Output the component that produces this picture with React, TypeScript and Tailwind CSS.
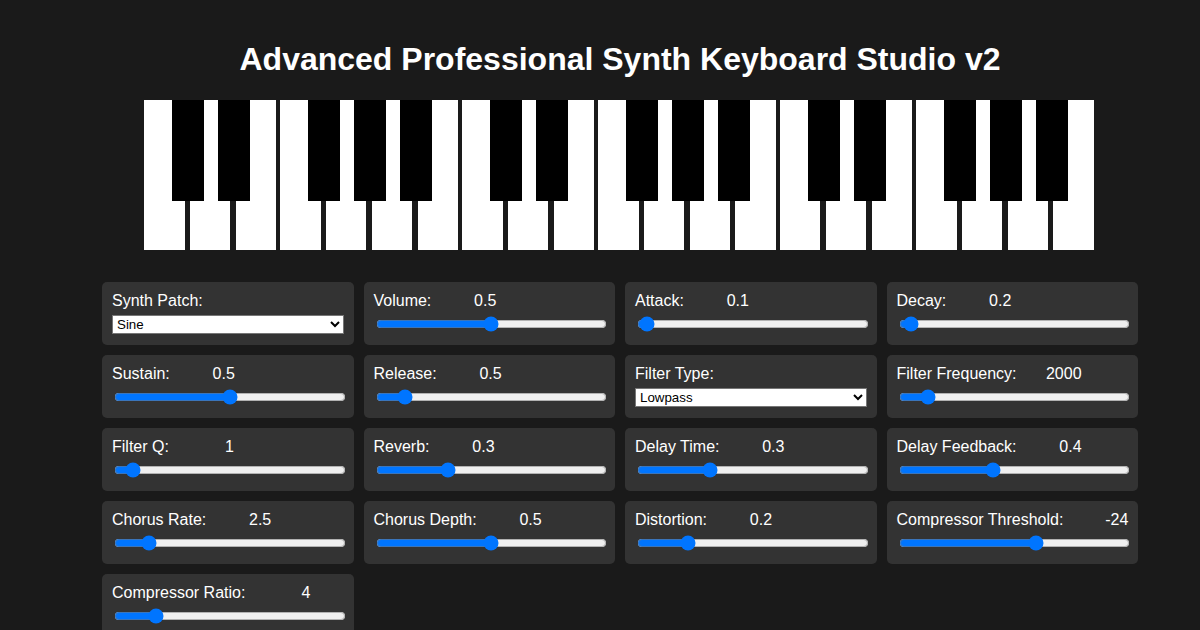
import React from "react";

type Ctl =
  | { kind: "select"; label: string; options: string[] }
  | { kind: "range"; label: string; value: string; min: number; max: number; v: number; step: number };

const controls: Ctl[] = [
  { kind: "select", label: "Synth Patch:", options: ["Sine", "Square", "Sawtooth", "Triangle"] },
  { kind: "range", label: "Volume:", value: "0.5", min: 0, max: 1, v: 0.5, step: 0.01 },
  { kind: "range", label: "Attack:", value: "0.1", min: 0, max: 10, v: 0.1, step: 0.01 },
  { kind: "range", label: "Decay:", value: "0.2", min: 0, max: 10, v: 0.2, step: 0.01 },
  { kind: "range", label: "Sustain:", value: "0.5", min: 0, max: 1, v: 0.5, step: 0.01 },
  { kind: "range", label: "Release:", value: "0.5", min: 0, max: 5, v: 0.5, step: 0.01 },
  { kind: "select", label: "Filter Type:", options: ["Lowpass", "Highpass", "Bandpass", "Notch"] },
  { kind: "range", label: "Filter Frequency:", value: "2000", min: 20, max: 20000, v: 2000, step: 1 },
  { kind: "range", label: "Filter Q:", value: "1", min: 0, max: 20, v: 1, step: 0.01 },
  { kind: "range", label: "Reverb:", value: "0.3", min: 0, max: 1, v: 0.3, step: 0.01 },
  { kind: "range", label: "Delay Time:", value: "0.3", min: 0, max: 1, v: 0.3, step: 0.01 },
  { kind: "range", label: "Delay Feedback:", value: "0.4", min: 0, max: 1, v: 0.4, step: 0.01 },
  { kind: "range", label: "Chorus Rate:", value: "2.5", min: 0, max: 20, v: 2.5, step: 0.01 },
  { kind: "range", label: "Chorus Depth:", value: "0.5", min: 0, max: 1, v: 0.5, step: 0.01 },
  { kind: "range", label: "Distortion:", value: "0.2", min: 0, max: 1, v: 0.2, step: 0.01 },
  { kind: "range", label: "Compressor Threshold:", value: "-24", min: -60, max: 0, v: -24, step: 1 },
  { kind: "range", label: "Compressor Ratio:", value: "4", min: 1, max: 20, v: 4, step: 0.1 },
];

const octave = [true, true, false, true, true, true, false];

function Keyboard() {
  const keys: { black: boolean; last: boolean }[] = [];
  for (let o = 0; o < 3; o++) {
    octave.forEach((b, i) => keys.push({ black: b, last: o === 2 && i === 6 }));
  }
  return (
    <div className="flex justify-center mb-[32px] pr-[2px]">
      <div className="flex">
        {keys.map((k, i) => (
          <div
            key={i}
            className={
              "relative w-[40.5px] h-[150px] bg-white " +
              (k.last ? "mr-0" : k.black ? "mr-[5.3px]" : "mr-[4px]")
            }
          >
            {k.black && (
              <div className="absolute left-[28px] top-0 w-[32px] h-[101px] bg-black z-10" />
            )}
          </div>
        ))}
      </div>
    </div>
  );
}

function Card({ c }: { c: Ctl }) {
  return (
    <div className="bg-[#333333] rounded-[5px] p-[10px]">
      {c.kind === "select" ? (
        <>
          <label className="block mb-[5px] leading-[normal] text-white whitespace-nowrap">{c.label}</label>
          <select
            defaultValue={c.options[0]}
            className="block w-full bg-white text-black text-[13.333px] leading-[normal] border border-[#767676] rounded-none"
          >
            {c.options.map((o) => (
              <option key={o}>{o}</option>
            ))}
          </select>
        </>
      ) : (
        <>
          <label className="block mb-[6px] leading-[normal] text-white whitespace-nowrap">
            {c.label}
            <span className="inline-block w-[60px] ml-[5px] text-right">{c.value}</span>
          </label>
          <input
            type="range"
            min={c.min}
            max={c.max}
            step={c.step}
            defaultValue={c.v}
            className="block w-full h-[16px] mt-[2px] mb-[3px] mx-[2px]"
          />
        </>
      )}
    </div>
  );
}

export default function App() {
  return (
    <div className="min-h-screen bg-[#1a1a1a] pt-[20px] pl-[40px] font-['Liberation_Sans',Arial,sans-serif] text-white">
      <h1 className="text-center text-[32px] font-bold leading-[normal] mt-[21.44px] mb-[22px]">
        Advanced Professional Synth Keyboard Studio v2
      </h1>
      <Keyboard />
      <div className="flex justify-center">
        <div className="grid grid-cols-4 gap-[10px] w-[1036px]">
          {controls.map((c, i) => (
            <Card key={i} c={c} />
          ))}
        </div>
      </div>
    </div>
  );
}
